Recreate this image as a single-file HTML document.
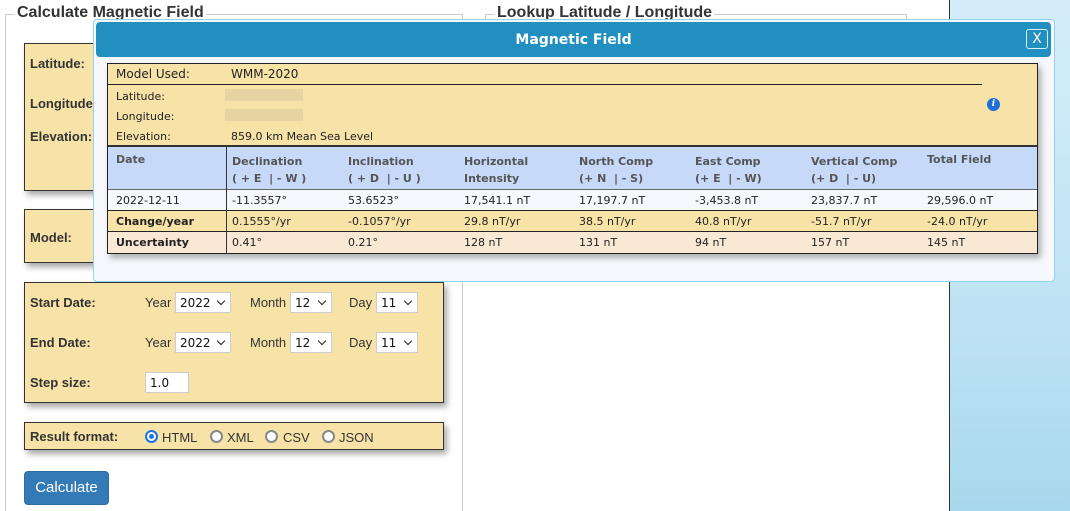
<!DOCTYPE html>
<html style="overflow:hidden;height:511px"><head><style>
*{box-sizing:border-box;margin:0;padding:0}
body{width:1070px;height:511px;overflow:hidden;background:#fff;font-family:"Liberation Sans",Arial,sans-serif;position:relative;color:#333}
.a{position:absolute}
.lg{font-weight:bold;font-size:16px;color:#333;background:#fff;padding:0 2px}
.box{position:absolute;background:#f7e3a7;border:1px solid #333;box-shadow:3px 4px 6px rgba(0,0,0,.35)}
.lb{position:absolute;font-weight:bold;font-size:13px;color:#333}
.t{position:absolute;font-size:13px;color:#333}
.sel{position:absolute;background:#fff;border:1px solid #ccc;height:21px;font-family:"DejaVu Sans",sans-serif;font-size:12px;color:#111;padding:3px 0 0 4px}
.sel.d:after{content:"";position:absolute;right:6px;top:5px;width:5px;height:5px;border-right:1.5px solid #222;border-bottom:1.5px solid #222;transform:rotate(45deg)}
.rad{position:absolute;width:13px;height:13px;border:2px solid #888;border-radius:50%;background:#fff;top:430px}
.m{font-family:"DejaVu Sans",Verdana,sans-serif;font-size:11px;color:#222;position:absolute}
.h{font-weight:bold;color:#555}
</style></head><body>
<div class="a" style="left:950px;top:0;width:120px;height:511px;background:linear-gradient(180deg,#d4eef9,#bfe3f4 60%,#a8d8ee)"></div>
<div class="a" style="left:949px;top:0;width:1px;height:511px;background:#333"></div>
<div class="a" style="left:5px;top:14px;width:458px;height:497px;border:1px solid #ccc;border-bottom:none"></div>
<div class="a lg" style="left:15px;top:4px">Calculate Magnetic Field</div>
<div class="a" style="left:485px;top:14px;width:422px;height:10px;border:1px solid #ccc;border-bottom:none"></div>
<div class="a lg" style="left:495px;top:4px">Lookup Latitude / Longitude</div>

<div class="box" style="left:24px;top:43px;width:420px;height:148px"></div>
<div class="lb" style="left:30px;top:56px">Latitude:</div>
<div class="lb" style="left:30px;top:96px">Longitude:</div>
<div class="lb" style="left:30px;top:129px">Elevation:</div>
<div class="box" style="left:24px;top:209px;width:420px;height:54px"></div>
<div class="lb" style="left:30px;top:230px">Model:</div>

<div class="box" style="left:24px;top:282px;width:420px;height:121px"></div>
<div class="lb" style="left:30px;top:295px">Start Date:</div>
<div class="lb" style="left:30px;top:335px">End Date:</div>
<div class="lb" style="left:30px;top:375px">Step size:</div>
<div class="t" style="left:145px;top:295px">Year</div><div class="sel d" style="left:175px;top:292px;width:56px">2022</div>
<div class="t" style="left:250px;top:295px">Month</div><div class="sel d" style="left:290px;top:292px;width:42px">12</div>
<div class="t" style="left:349px;top:295px">Day</div><div class="sel d" style="left:376px;top:292px;width:42px">11</div>
<div class="t" style="left:145px;top:335px">Year</div><div class="sel d" style="left:175px;top:332px;width:56px">2022</div>
<div class="t" style="left:250px;top:335px">Month</div><div class="sel d" style="left:290px;top:332px;width:42px">12</div>
<div class="t" style="left:349px;top:335px">Day</div><div class="sel d" style="left:376px;top:332px;width:42px">11</div>
<div class="sel" style="left:145px;top:372px;width:44px">1.0</div>
<div class="box" style="left:24px;top:422px;width:420px;height:28px"></div>
<div class="lb" style="left:30px;top:429px">Result format:</div>
<div class="rad" style="left:145px;border-color:#1a73e8"><div style="position:absolute;left:2px;top:2px;width:5px;height:5px;border-radius:50%;background:#1a73e8"></div></div>
<div class="t" style="left:162px;top:430px">HTML</div>
<div class="rad" style="left:210px"></div><div class="t" style="left:227px;top:430px">XML</div>
<div class="rad" style="left:265px"></div><div class="t" style="left:283px;top:430px">CSV</div>
<div class="rad" style="left:322px"></div><div class="t" style="left:339px;top:430px">JSON</div>
<div class="a" style="left:24px;top:471px;width:85px;height:34px;background:#337ab7;border:1px solid #2e6da4;border-radius:4px;color:#fff;font-size:15px;text-align:center;line-height:32px">Calculate</div>

<div class="a" style="left:93px;top:19px;width:962px;height:263px;background:#f7f8fd;border:1px solid #8fd3ee;border-radius:4px"></div>
<div class="a" style="left:96px;top:22px;width:955px;height:35px;background:#2190c0;border-radius:4px;color:#fff;font-family:'DejaVu Sans',Verdana,sans-serif;font-weight:bold;font-size:14px;text-align:center;line-height:36px">Magnetic Field</div>
<div class="a" style="left:1026px;top:29px;width:22px;height:20px;border:1px solid #d8eef8;border-radius:3px;color:#fff;font-family:'DejaVu Sans',sans-serif;font-size:14px;text-align:center;line-height:19px">X</div>

<div class="a" style="left:107px;top:63px;width:931px;height:191px;border:1px solid #222;background:#f7e3a7;box-shadow:3px 4px 6px rgba(0,0,0,.3)"></div>
<div class="a" style="left:108px;top:84px;width:874px;height:1px;background:#222"></div>
<div class="m" style="left:116px;top:67px;font-size:12px">Model Used:</div>
<div class="m" style="left:231px;top:67px;font-size:12px">WMM-2020</div>
<div class="m" style="left:116px;top:90px">Latitude:</div>
<div class="m" style="left:116px;top:110px">Longitude:</div>
<div class="m" style="left:116px;top:130px">Elevation:</div>
<div class="a" style="left:225px;top:89px;width:78px;height:12px;background:#e5d3a2"></div>
<div class="a" style="left:225px;top:109px;width:78px;height:12px;background:#e5d3a2"></div>
<div class="m" style="left:231px;top:130px">859.0 km Mean Sea Level</div>
<div class="a" style="left:987px;top:98px;width:13px;height:13px;border-radius:50%;background:#1e6fd9;color:#fff;font:bold italic 9px 'DejaVu Serif',serif;text-align:center;line-height:13px">i</div>

<div class="a" style="left:108px;top:145px;width:929px;height:45px;background:#c6d9f9;border-top:2px solid #333;border-bottom:1px solid #666"></div>
<div class="a" style="left:108px;top:190px;width:929px;height:20px;background:#f7f8fd"></div>
<div class="a" style="left:108px;top:210px;width:929px;height:22px;background:#f7e3a7;border-top:1px solid #222;border-bottom:1px solid #222"></div>
<div class="a" style="left:108px;top:232px;width:929px;height:21px;background:#f9e8d4"></div>
<div class="a" style="left:226px;top:146px;width:1px;height:107px;background:#333"></div>

<div class="m h" style="left:116px;top:153px">Date</div>
<div class="m h" style="left:232px;top:153px;line-height:17px">Declination<br>( + E &nbsp;| - W )</div>
<div class="m h" style="left:348px;top:153px;line-height:17px">Inclination<br>( + D &nbsp;| - U )</div>
<div class="m h" style="left:464px;top:153px;line-height:17px">Horizontal<br>Intensity</div>
<div class="m h" style="left:579px;top:153px;line-height:17px">North Comp<br>(+ N &nbsp;| - S)</div>
<div class="m h" style="left:695px;top:153px;line-height:17px">East Comp<br>(+ E &nbsp;| - W)</div>
<div class="m h" style="left:811px;top:153px;line-height:17px">Vertical Comp<br>(+ D &nbsp;| - U)</div>
<div class="m h" style="left:927px;top:153px">Total Field</div>

<div class="m" style="left:116px;top:194px">2022-12-11</div>
<div class="m" style="left:232px;top:194px">-11.3557°</div>
<div class="m" style="left:348px;top:194px">53.6523°</div>
<div class="m" style="left:464px;top:194px">17,541.1 nT</div>
<div class="m" style="left:579px;top:194px">17,197.7 nT</div>
<div class="m" style="left:695px;top:194px">-3,453.8 nT</div>
<div class="m" style="left:811px;top:194px">23,837.7 nT</div>
<div class="m" style="left:927px;top:194px">29,596.0 nT</div>

<div class="m" style="left:116px;top:215px;font-weight:bold">Change/year</div>
<div class="m" style="left:232px;top:215px">0.1555°/yr</div>
<div class="m" style="left:348px;top:215px">-0.1057°/yr</div>
<div class="m" style="left:464px;top:215px">29.8 nT/yr</div>
<div class="m" style="left:579px;top:215px">38.5 nT/yr</div>
<div class="m" style="left:695px;top:215px">40.8 nT/yr</div>
<div class="m" style="left:811px;top:215px">-51.7 nT/yr</div>
<div class="m" style="left:927px;top:215px">-24.0 nT/yr</div>

<div class="m" style="left:116px;top:236px;font-weight:bold">Uncertainty</div>
<div class="m" style="left:232px;top:236px">0.41°</div>
<div class="m" style="left:348px;top:236px">0.21°</div>
<div class="m" style="left:464px;top:236px">128 nT</div>
<div class="m" style="left:579px;top:236px">131 nT</div>
<div class="m" style="left:695px;top:236px">94 nT</div>
<div class="m" style="left:811px;top:236px">157 nT</div>
<div class="m" style="left:927px;top:236px">145 nT</div>
</body></html>
